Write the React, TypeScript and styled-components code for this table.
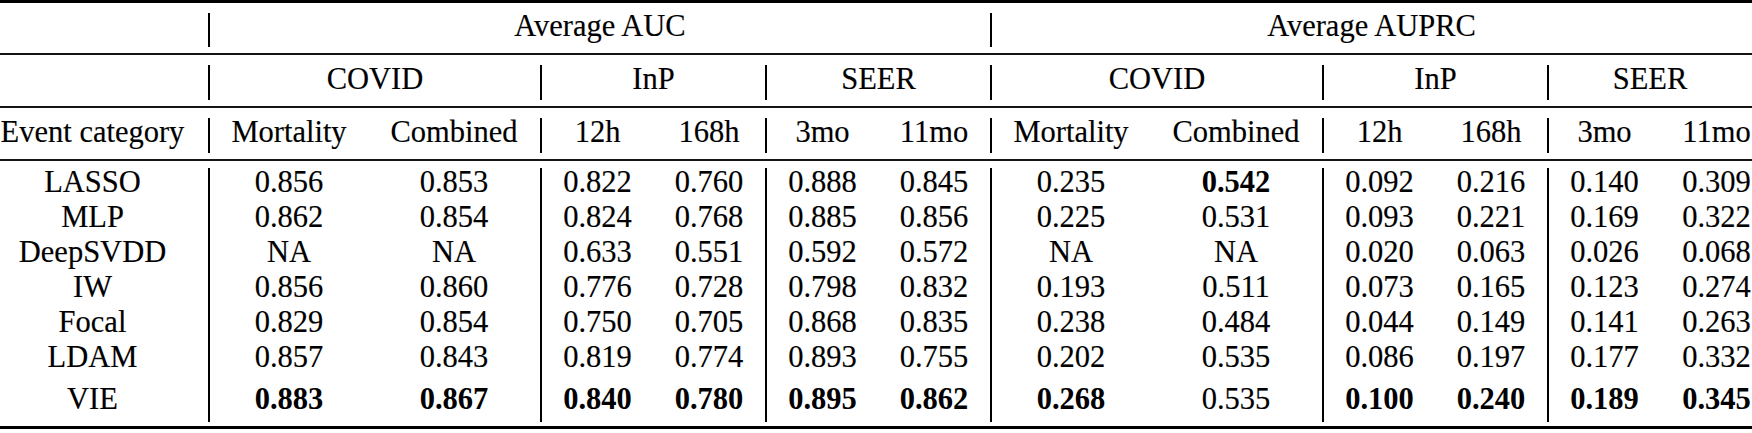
import React from 'react'
import styled, { createGlobalStyle } from 'styled-components'

// column tracks: label | bar | 2 cols | bar | 2 cols ... last column has no right padding
const COLS = '208px 2px 158px 172px 2px 111px 112px 2px 111px 112px 2px 158px 172px 2px 111px 112px 2px 111px 91px'
const BAR_COLS = [2, 5, 8, 11, 14, 17]

type Row = {
    name: string;
    values: string[];
    bold: number[];
}

const rows: Row[] = [
    { name: 'LASSO', values: ['0.856', '0.853', '0.822', '0.760', '0.888', '0.845', '0.235', '0.542', '0.092', '0.216', '0.140', '0.309'], bold: [7] },
    { name: 'MLP', values: ['0.862', '0.854', '0.824', '0.768', '0.885', '0.856', '0.225', '0.531', '0.093', '0.221', '0.169', '0.322'], bold: [] },
    { name: 'DeepSVDD', values: ['NA', 'NA', '0.633', '0.551', '0.592', '0.572', 'NA', 'NA', '0.020', '0.063', '0.026', '0.068'], bold: [] },
    { name: 'IW', values: ['0.856', '0.860', '0.776', '0.728', '0.798', '0.832', '0.193', '0.511', '0.073', '0.165', '0.123', '0.274'], bold: [] },
    { name: 'Focal', values: ['0.829', '0.854', '0.750', '0.705', '0.868', '0.835', '0.238', '0.484', '0.044', '0.149', '0.141', '0.263'], bold: [] },
    { name: 'LDAM', values: ['0.857', '0.843', '0.819', '0.774', '0.893', '0.755', '0.202', '0.535', '0.086', '0.197', '0.177', '0.332'], bold: [] },
    { name: 'VIE', values: ['0.883', '0.867', '0.840', '0.780', '0.895', '0.862', '0.268', '0.535', '0.100', '0.240', '0.189', '0.345'], bold: [0, 1, 2, 3, 4, 5, 6, 8, 9, 10, 11] },
]

const datasets = ['COVID', 'InP', 'SEER']
const events = ['Mortality', 'Combined', '12h', '168h', '3mo', '11mo']

const GlobalStyle = createGlobalStyle`
    html, body {
        margin: 0;
        padding: 0;
        background: #fff;
        overflow: hidden;
    }
`

const Page = styled.div`
    width: 1752px;
    height: 433px;
    overflow: hidden;
    background: #fff;
    color: #000;
    font-family: "Liberation Serif", "DejaVu Serif", serif;
    font-size: 30.5px;
`

const Table = styled.div`
    width: 1752px;
    display: flex;
    flex-direction: column;
`

const Rule = styled.div<{ $thick?: boolean }>`
    height: ${p => p.$thick ? '3px' : '2px'};
    background: ${p => p.$thick ? '#000' : '#151515'};
`

const HeaderRow = styled.div<{ $h: number }>`
    display: grid;
    grid-template-columns: ${COLS};
    height: ${p => p.$h}px;
`

const Cell = styled.div<{ $span?: number; $bold?: boolean; $edge?: boolean }>`
    grid-column: span ${p => p.$span ?? 1};
    display: flex;
    align-items: center;
    justify-content: center;
    white-space: nowrap;
    line-height: 1;
    padding-bottom: 3px;
    padding-left: ${p => p.$edge ? '22px' : '0'};
    font-weight: ${p => p.$bold ? 700 : 400};
    -webkit-text-stroke: ${p => p.$bold ? '0' : '0.15px'} #000;
`

const LabelCell = styled(Cell)`
    padding-right: 23px;
`

const HeaderBar = styled.div`
    width: 1.5px;
    justify-self: center;
    margin: 10px 0 6px;
    background: #000;
`

const Body = styled.div`
    display: grid;
    grid-template-columns: ${COLS};
    grid-template-rows: repeat(6, 35px) 42px;
    padding: 4px 0 9px;
`

const BodyBar = styled.div<{ $col: number }>`
    grid-column: ${p => p.$col};
    grid-row: 1 / -1;
    width: 1.5px;
    justify-self: center;
    margin: 3px 0 -5px;
    background: #000;
`

const BodyCell = styled(Cell)`
    height: 35px;
    padding-bottom: 0;
    align-self: end;
`

const BodyLabel = styled(BodyCell)`
    padding-right: 23px;
`

const App: React.FC = () => {
    return (
        <Page>
            <GlobalStyle />
            <Table>
                <Rule $thick />

                <HeaderRow $h={50}>
                    <LabelCell />
                    <HeaderBar />
                    <Cell $span={8}>Average AUC</Cell>
                    <HeaderBar />
                    <Cell $span={8}>Average AUPRC</Cell>
                </HeaderRow>
                <Rule />

                <HeaderRow $h={51}>
                    <LabelCell />
                    {[...datasets, ...datasets].map((d, i) => (
                        <React.Fragment key={i}>
                            <HeaderBar />
                            <Cell $span={2}>{d}</Cell>
                        </React.Fragment>
                    ))}
                </HeaderRow>
                <Rule />

                <HeaderRow $h={51}>
                    <LabelCell>Event category</LabelCell>
                    {[...events, ...events].map((e, i) => (
                        <React.Fragment key={i}>
                            {i % 2 === 0 && <HeaderBar />}
                            <Cell $edge={i === 11}>{e}</Cell>
                        </React.Fragment>
                    ))}
                </HeaderRow>
                <Rule />

                <Body>
                    {BAR_COLS.map(c => <BodyBar key={c} $col={c} />)}
                    {rows.map(r => (
                        <React.Fragment key={r.name}>
                            <BodyLabel>{r.name}</BodyLabel>
                            {r.values.map((v, i) => (
                                <BodyCell key={i} $bold={r.bold.includes(i)} $edge={i === 11}>{v}</BodyCell>
                            ))}
                        </React.Fragment>
                    ))}
                </Body>
                <Rule $thick />
            </Table>
        </Page>
    )
}

export default App
